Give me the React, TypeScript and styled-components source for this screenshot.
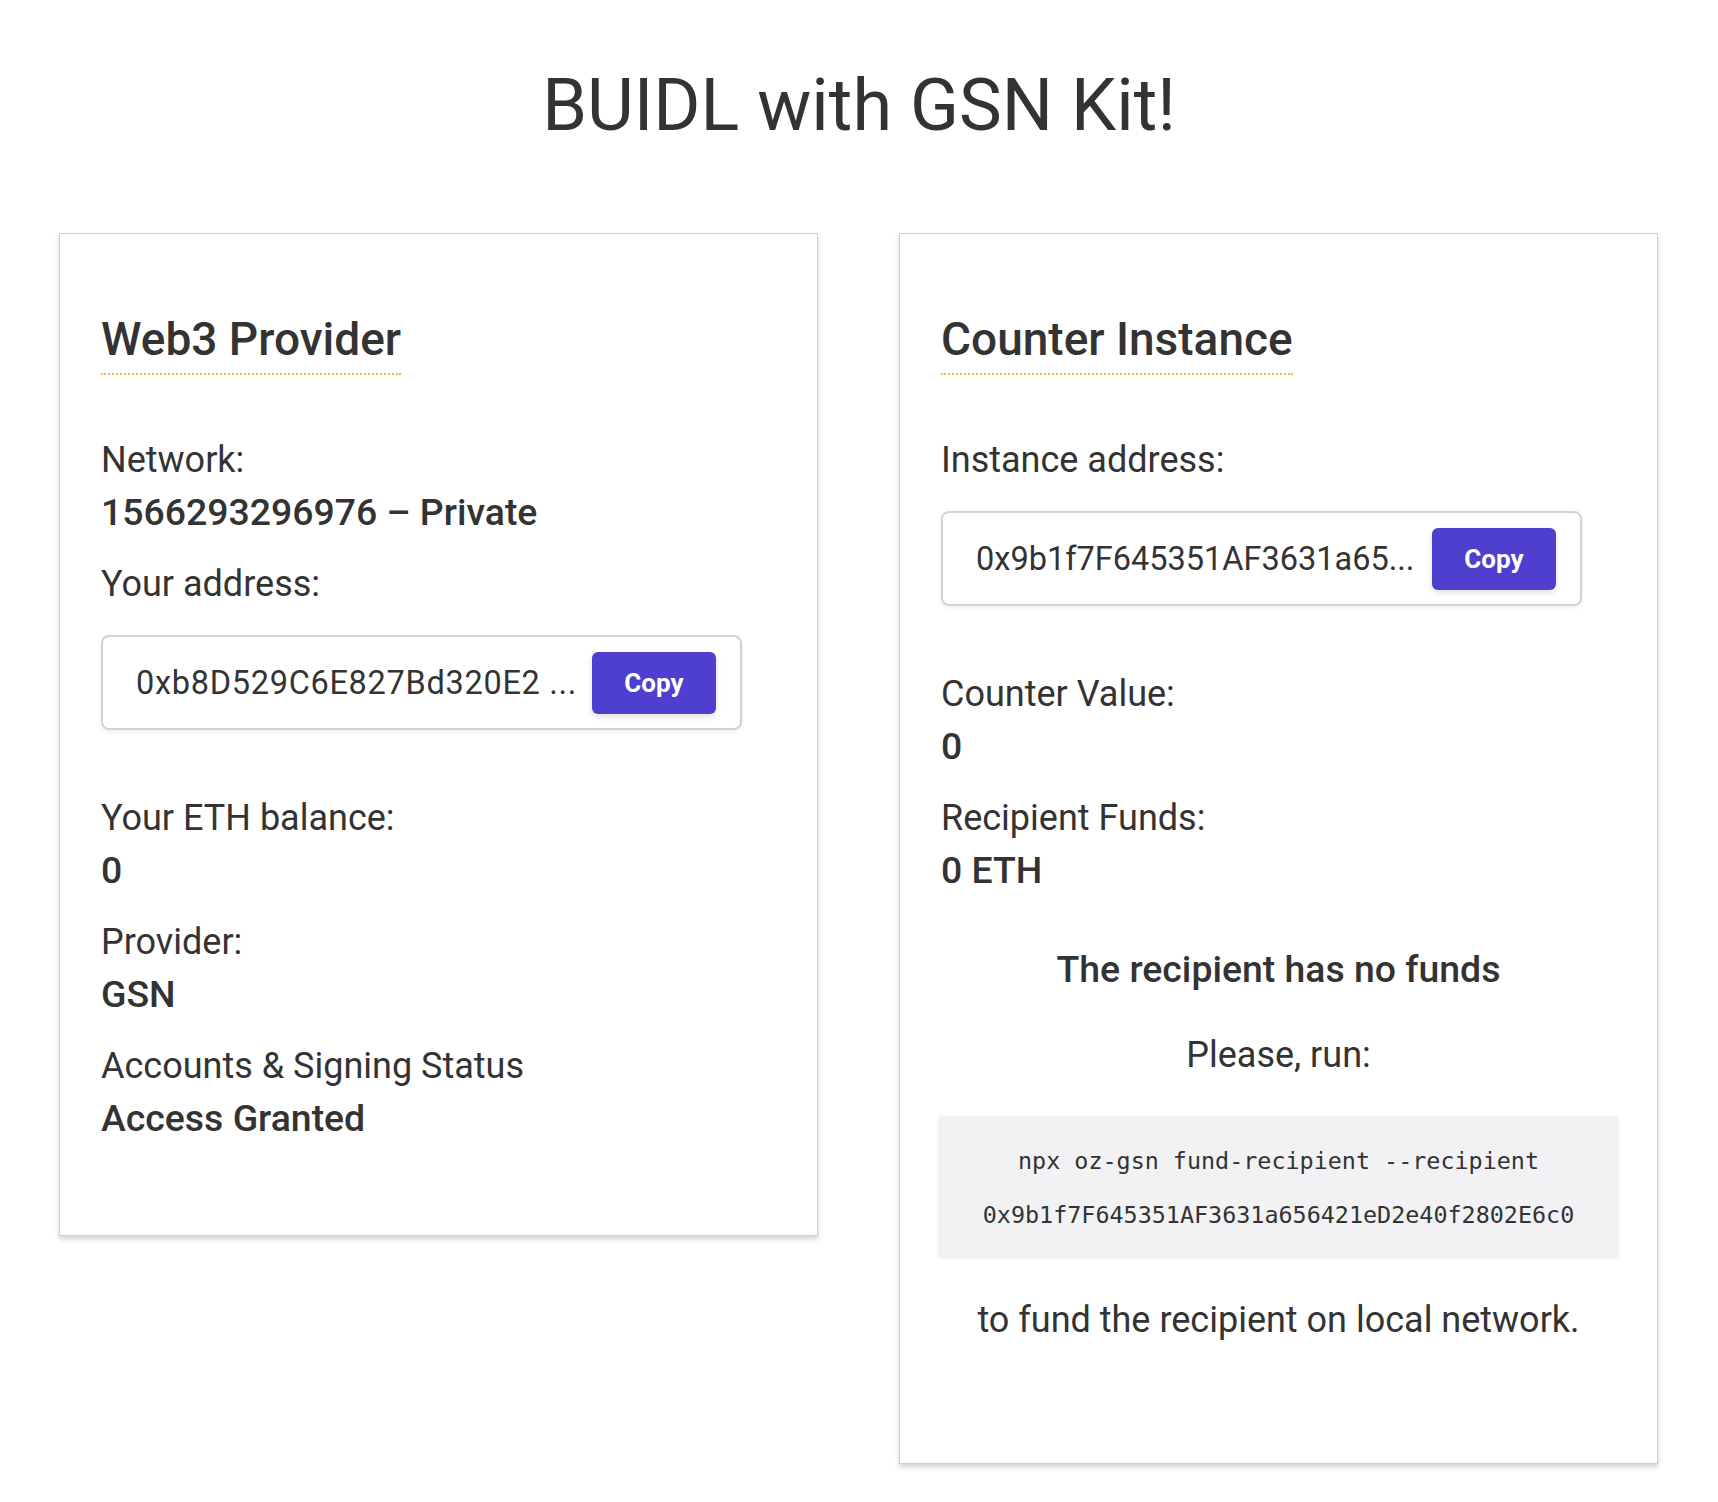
import React from 'react';
import styled, {createGlobalStyle} from 'styled-components';

const GlobalStyle = createGlobalStyle`
  body {
    margin: 0;
    background: #fff;
    color: #333;
    font-family: Roboto, 'Liberation Sans', sans-serif;
  }
`;

const App: React.FC = () => {
  return (
    <>
      <GlobalStyle />
      <Page>
        <Title>BUIDL with GSN Kit!</Title>
        <Cards>
          <Card>
            <Heading>Web3 Provider</Heading>
            <Field>
              <Label>Network:</Label>
              <Value>1566293296976 – Private</Value>
            </Field>
            <Field>
              <Label>Your address:</Label>
            </Field>
            <AddressBox>
              <AddressText $spacing={0.7}>0xb8D529C6E827Bd320E2 ...</AddressText>
              <CopyButton>Copy</CopyButton>
            </AddressBox>
            <Field $top={62}>
              <Label>Your ETH balance:</Label>
              <Value>0</Value>
            </Field>
            <Field>
              <Label>Provider:</Label>
              <Value>GSN</Value>
            </Field>
            <Field>
              <Label>Accounts &amp; Signing Status</Label>
              <Value>Access Granted</Value>
            </Field>
            <Spacer $h={71} />
          </Card>

          <Card>
            <Heading>Counter Instance</Heading>
            <Field>
              <Label>Instance address:</Label>
            </Field>
            <AddressBox>
              <AddressText>0x9b1f7F645351AF3631a65...</AddressText>
              <CopyButton>Copy</CopyButton>
            </AddressBox>
            <Field $top={62}>
              <Label>Counter Value:</Label>
              <Value>0</Value>
            </Field>
            <Field>
              <Label>Recipient Funds:</Label>
              <Value>0 ETH</Value>
            </Field>
            <Notice>
              <Strong>The recipient has no funds</Strong>
              <Centered $top={34}>Please, run:</Centered>
              <CodeBlock>
                <CodeLine>npx oz-gsn fund-recipient --recipient</CodeLine>
                <CodeLine>0x9b1f7F645351AF3631a656421eD2e40f2802E6c0</CodeLine>
              </CodeBlock>
              <Centered $top={37}>to fund the recipient on local network.</Centered>
            </Notice>
            <Spacer $h={117} />
          </Card>
        </Cards>
      </Page>
    </>
  );
};

export default App;

const Page = styled.div`
  width: 1718px;
  padding-bottom: 40px;
`;

const Title = styled.h1`
  margin: 63px 0 0;
  text-align: center;
  font-size: 72px;
  font-weight: 400;
  line-height: normal;
  color: #333;
`;

const Cards = styled.div`
  display: flex;
  justify-content: center;
  align-items: flex-start;
  gap: 81px;
  margin: 85px 0 0 -1px;
`;

const Card = styled.div`
  box-sizing: border-box;
  width: 759px;
  padding: 0 41px;
  border: 1px solid #cfcfcf;
  box-shadow: 0 3px 5px rgba(0, 0, 0, 0.18);
  background: #fff;
  display: flex;
  flex-direction: column;
  align-items: flex-start;
`;

const Heading = styled.h3`
  margin: 78px 0 59px;
  padding-bottom: 7px;
  font-size: 46px;
  font-weight: 500;
  line-height: normal;
  border-bottom: 2px dotted #f5b53f;
`;

const Field = styled.div<{$top?: number}>`
  margin-top: ${p => (p.$top !== undefined ? p.$top : 0)}px;
  margin-bottom: 20px;
  display: flex;
  flex-direction: column;
`;

const Label = styled.div`
  font-size: 36px;
  line-height: 52px;
  font-weight: 400;
`;

const Value = styled.div`
  font-size: 37.4px;
  line-height: 52px;
  font-weight: 500;
`;

const AddressBox = styled.div`
  box-sizing: border-box;
  width: 641px;
  height: 95px;
  margin-top: 5px;
  padding: 0 24px 0 33px;
  border: 2px solid #d2d2d2;
  border-radius: 8px;
  box-shadow: 0 2px 4px rgba(0, 0, 0, 0.06);
  display: flex;
  align-items: center;
  justify-content: space-between;
  gap: 16px;
`;

const AddressText = styled.span<{$spacing?: number}>`
  font-size: 32.5px;
  letter-spacing: ${p => p.$spacing ?? 0}px;
  white-space: nowrap;
  overflow: hidden;
  color: #333;
`;

const CopyButton = styled.button`
  flex: none;
  width: 124px;
  height: 62px;
  border: none;
  border-radius: 6px;
  background: #4e3fce;
  color: #fff;
  font-family: Roboto, 'Liberation Sans', sans-serif;
  font-size: 26px;
  font-weight: 700;
  box-shadow: 0 3px 6px rgba(0, 0, 0, 0.12);
  cursor: pointer;
`;

const Notice = styled.div`
  align-self: stretch;
  margin-top: 27px;
  display: flex;
  flex-direction: column;
  align-items: center;
`;

const Strong = styled.div`
  font-size: 37.4px;
  line-height: 52px;
  font-weight: 500;
`;

const Centered = styled.div<{$top: number}>`
  margin-top: ${p => p.$top}px;
  font-size: 36px;
  line-height: 52px;
  text-align: center;
`;

const CodeBlock = styled.div`
  box-sizing: border-box;
  align-self: stretch;
  margin: 35px -2px 0;
  padding: 18px 0 15px;
  background: #f2f2f4;
  box-shadow: 0 1px 3px rgba(0, 0, 0, 0.1);
  display: flex;
  flex-direction: column;
  align-items: center;
`;

const CodeLine = styled.code`
  font-family: 'DejaVu Sans Mono', 'Liberation Mono', monospace;
  font-size: 23.4px;
  line-height: 54px;
  color: #333;
  white-space: nowrap;
`;

const Spacer = styled.div<{$h: number}>`
  height: ${p => p.$h}px;
`;
